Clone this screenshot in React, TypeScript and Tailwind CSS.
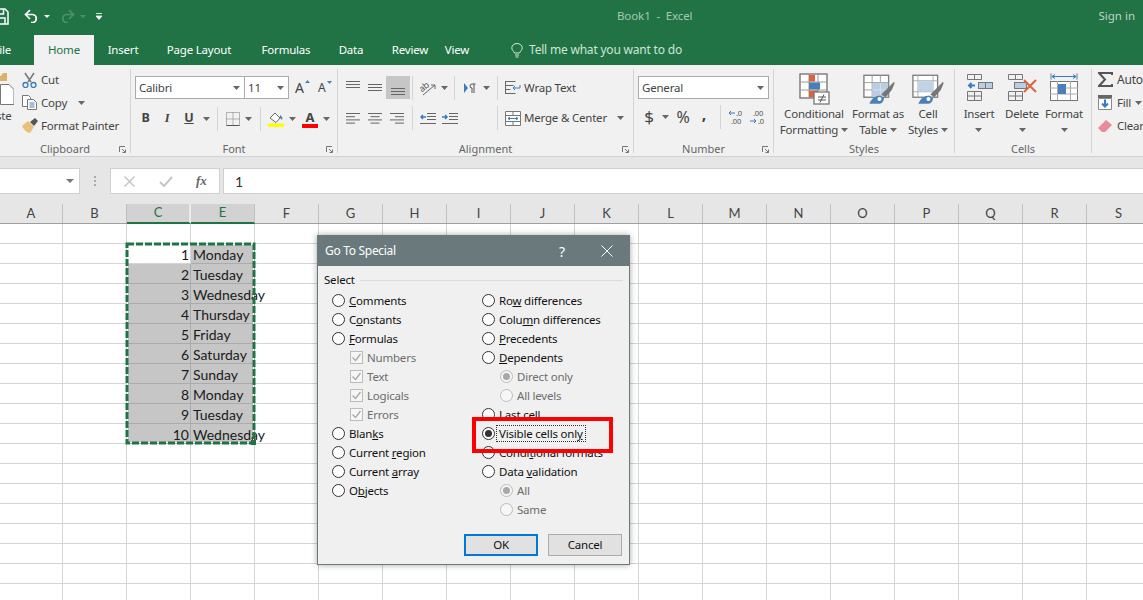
import type { ReactNode } from "react";

const columns = ["A", "B", "C", "E", "F", "G", "H", "I", "J", "K", "L", "M", "N", "O", "P", "Q", "R", "S"];
const days = ["Monday", "Tuesday", "Wednesday", "Thursday", "Friday", "Saturday", "Sunday", "Monday", "Tuesday", "Wednesday"];

function Caret({ className = "" }: { className?: string }) {
  return (
    <svg width="7" height="4" viewBox="0 0 7 4" className={`shrink-0 ${className}`}>
      <path d="M0 0h7L3.5 4z" fill="#666" />
    </svg>
  );
}

function Sep({ className = "" }: { className?: string }) {
  return <div className={`w-px h-[24px] bg-[#d4d4d4] shrink-0 ${className}`} />;
}

function Lines({ kind }: { kind: "left" | "center" | "right" }) {
  const rows = kind === "left" ? [[0, 14], [0, 9], [0, 14], [0, 9]] : kind === "center" ? [[0, 14], [2.5, 11.5], [0, 14], [2.5, 11.5]] : [[0, 14], [5, 14], [0, 14], [5, 14]];
  return (
    <svg width="14" height="11" viewBox="0 0 14 11" className="shrink-0">
      {rows.map((r, i) => (
        <path key={i} d={`M${r[0]} ${i * 3.2 + 0.5}H${r[1]}`} stroke="#666" />
      ))}
    </svg>
  );
}

function VAlign({ y }: { y: number }) {
  return (
    <svg width="14" height="14" viewBox="0 0 14 14" className="shrink-0">
      {[0, 3, 6].map((d) => (
        <path key={d} d={`M0 ${y + d + 0.5}H14`} stroke="#666" />
      ))}
    </svg>
  );
}

function Launcher() {
  return (
    <svg width="7" height="7" viewBox="0 0 7 7" className="absolute right-[4px] top-[5px]">
      <path d="M.5 6V.5H6M3 3l3.500 3.500M6.500 3.500v3h-3" stroke="#777" fill="none" />
    </svg>
  );
}

function Group({ label, className, launcher, children }: { label: string; className: string; launcher?: boolean; children: ReactNode }) {
  return (
    <div className={`h-[84px] flex flex-col border-r border-[#d4d4d4] shrink-0 ${className}`}>
      <div className="h-[72px]">{children}</div>
      <div className="relative h-[12px] text-center text-[11px] leading-[16px] tracking-normal text-[#666]">
        {label}
        {launcher && <Launcher />}
      </div>
    </div>
  );
}

function BigButton({ icon, lines, className }: { icon: ReactNode; lines: ReactNode[]; className: string }) {
  return (
    <div className={`flex flex-col items-center shrink-0 ${className}`}>
      <div className="h-[32px] mt-[4px] flex justify-center">{icon}</div>
      <div className="mt-[1px] leading-[16px] whitespace-nowrap text-center flex flex-col items-center">
        {lines.map((l, i) => (
          <div key={i} className="h-[16px] flex items-center gap-[3px]">
            {l}
          </div>
        ))}
      </div>
    </div>
  );
}

function TableGrid() {
  return (
    <>
      <rect x="1" y="1" width="27" height="24" fill="#fff" stroke="#808080" strokeWidth="1.500" />
      <path d="M1 9h27M1 17h27M10 1v24M19 1v24" stroke="#999" />
    </>
  );
}

function Brush() {
  return (
    <>
      <path d="M20 22l8-8 6-6 .5 2-3 7-7 8z" fill="#777" />
      <path d="M7 32c2-5 6-9 12-9l4 3c0 2-2 6-5 6z" fill="#4a80b8" />
      <circle cx="18" cy="27" r="2.200" fill="#fff" />
    </>
  );
}

function Radio({ on, off }: { on?: boolean; off?: boolean }) {
  return (
    <span className={`w-[13px] h-[13px] rounded-full border flex items-center justify-center shrink-0 ${off ? "border-[#bcbcbc] bg-[#f6f6f6]" : "border-[#333] bg-white"}`}>
      {on && <span className={`w-[7px] h-[7px] rounded-full ${off ? "bg-[#a8a8a8]" : "bg-[#333]"}`} />}
    </span>
  );
}

function Opt({ children }: { children: ReactNode }) {
  return (
    <div className="h-[19px] flex items-center gap-[4px] whitespace-nowrap text-[#111]">
      <Radio />
      <span>{children}</span>
    </div>
  );
}

function SubOpt({ on, children }: { on?: boolean; children: ReactNode }) {
  return (
    <div className="h-[19px] flex items-center gap-[4px] ml-[18px] whitespace-nowrap text-[#6d6d6d]">
      <Radio on={on} off />
      <span>{children}</span>
    </div>
  );
}

function Check({ children }: { children: ReactNode }) {
  return (
    <div className="h-[19px] flex items-center gap-[4px] ml-[18px] text-[#6d6d6d]">
      <svg width="13" height="13" viewBox="0 0 13 13" className="shrink-0">
        <rect x=".5" y=".5" width="12" height="12" fill="#f6f6f6" stroke="#bcbcbc" />
        <path d="M2.500 6.500l3 3 5-6.500" fill="none" stroke="#a8a8a8" strokeWidth="1.300" />
      </svg>
      <span>{children}</span>
    </div>
  );
}

function GoToSpecial() {
  return (
    <div className="absolute left-[317px] top-[235px] w-[313px] h-[330px] bg-[#f0f0f0] border border-[#6a7a7c] shadow-[0_0_6px_rgba(0,0,0,0.35)] font-['Noto_Sans',sans-serif] text-[11.5px] tracking-[-0.2px]">
      <div className="h-[30px] bg-[#6a7a7c] flex items-center pl-[7px] text-[12px] tracking-[-0.3px] text-white">
        <span className="w-[71px] whitespace-nowrap">Go To Special</span>
        <span className="ml-[161px] w-[10px] text-[14px] text-center">?</span>
        <svg width="12" height="12" viewBox="0 0 12 12" className="ml-[34px]">
          <path d="M.5.500l11 11M11.500.5l-11 11" stroke="#fff" />
        </svg>
      </div>
      <div className="mt-[6px] pl-[6px] pr-[6px] h-[16px] flex items-center gap-[5px] text-[#111]">
        <span>Select</span>
        <div className="flex-1 h-px bg-[#dcdcdc]" />
      </div>
      <div className="mt-[3px] pl-[14px] flex">
        <div className="w-[150px]">
          <Opt><u>C</u>omments</Opt>
          <Opt>C<u>o</u>nstants</Opt>
          <Opt><u>F</u>ormulas</Opt>
          <Check>Numbers</Check>
          <Check>Text</Check>
          <Check>Logicals</Check>
          <Check>Errors</Check>
          <Opt>Blan<u>k</u>s</Opt>
          <Opt>Current <u>r</u>egion</Opt>
          <Opt>Current <u>a</u>rray</Opt>
          <Opt>O<u>b</u>jects</Opt>
        </div>
        <div className="flex-1">
          <Opt>Ro<u>w</u> differences</Opt>
          <Opt>Colu<u>m</u>n differences</Opt>
          <Opt><u>P</u>recedents</Opt>
          <Opt><u>D</u>ependents</Opt>
          <SubOpt on>Direct only</SubOpt>
          <SubOpt>All levels</SubOpt>
          <Opt>Last cell</Opt>
          <div className="h-[19px] flex items-center gap-[2px] whitespace-nowrap text-[#111]">
            <Radio on />
            <span className="px-[2px] outline-1 outline-dotted outline-[#333] leading-[15px]">Visible cells onl<u>y</u></span>
          </div>
          <Opt>Condi<u>t</u>ional formats</Opt>
          <Opt>Data <u>v</u>alidation</Opt>
          <SubOpt on>All</SubOpt>
          <SubOpt>Same</SubOpt>
        </div>
      </div>
      <div className="mt-[15px] pr-[7px] flex justify-end gap-[10px] text-[#111]">
        <button className="w-[74px] h-[22px] bg-[#e1e1e1] border-2 border-[#0078d7]">OK</button>
        <button className="w-[74px] h-[22px] bg-[#e1e1e1] border border-[#adadad]">Cancel</button>
      </div>
    </div>
  );
}

export default function App() {
  return (
    <div className="relative w-[1143px] h-[600px] overflow-hidden bg-white font-['Noto_Sans',sans-serif]">
      {/* Title bar + tabs */}
      <div className="h-[65px] bg-[#217346]">
        <div className="h-[32px] flex items-center relative">
          <svg width="17" height="17" viewBox="0 0 17 17" className="ml-[-8px]">
            <path d="M1 1h12l3 3v12H1zM4.500 1v5h7V1M4 16v-6h9v6" fill="none" stroke="#fff" strokeWidth="1.500" />
          </svg>
          <svg width="15" height="14" viewBox="0 0 15 14" className="ml-[15px]">
            <path d="M6 1L1.500 5.500 6 10M2 5.500h7a4.200 4.200 0 0 1 0 8.200H7" fill="none" stroke="#fff" strokeWidth="1.700" />
          </svg>
          <svg width="6" height="3" viewBox="0 0 6 3" className="ml-[5px]"><path d="M0 0h6L3 3z" fill="#fff" /></svg>
          <svg width="15" height="14" viewBox="0 0 15 14" className="ml-[10px]">
            <path d="M9 1l4.500 4.500L9 10M13 5.500H6a4.200 4.200 0 0 0 0 8.200h2" fill="none" stroke="#4f9068" strokeWidth="1.700" />
          </svg>
          <svg width="6" height="3" viewBox="0 0 6 3" className="ml-[5px]"><path d="M0 0h6L3 3z" fill="#4f9068" /></svg>
          <svg width="6" height="7" viewBox="0 0 6 7" className="ml-[10px] mt-[1px]"><path d="M0 .5h6M0 3h6L3 6.500z" stroke="#fff" strokeWidth=".8" fill="#fff" /></svg>
          <div className="ml-[515px] text-[11.5px] tracking-[-0.1px] text-[#a6c8b4] whitespace-pre">Book1  -  Excel</div>
          <div className="ml-auto mr-[8px] text-[11.5px] text-[#bcd5c6]">Sign in</div>
        </div>
        <div className="h-[30px] mt-[3px] flex items-center text-[11.5px] tracking-[-0.2px] text-white whitespace-nowrap">
          <div className="w-[34px] pr-[23px] flex justify-end"><span>File</span></div>
          <div className="w-[60px] h-[30px] bg-[#f1f1f1] text-[#217346] flex items-center justify-center">Home</div>
          <div className="w-[58px] text-center">Insert</div>
          <div className="w-[94px] text-center">Page Layout</div>
          <div className="w-[80px] text-center">Formulas</div>
          <div className="w-[50px] text-center">Data</div>
          <div className="w-[68px] text-center">Review</div>
          <div className="w-[26px] flex justify-center">View</div>
          <svg width="12" height="15" viewBox="0 0 12 15" className="ml-[41px]">
            <path d="M3.500 10C2.500 8 .8 7 .8 4.800a5.200 4.300 0 0 1 10.400 0C11.200 7 9.500 8 8.500 10zM4 12h4M4.500 14h3" fill="none" stroke="#d8e8de" />
          </svg>
          <div className="ml-[6px] text-[12px] text-[#cfe3d7]">Tell me what you want to do</div>
        </div>
      </div>

      {/* Ribbon */}
      <div className="h-[92px] bg-[#f1f1f1] border-b border-[#d2d2d2] pt-[4px] flex text-[#444] text-[11.5px] tracking-[-0.2px]">
        <Group label="Clipboard" launcher className="w-[131px]">
          <div className="flex -mt-[1px]">
            <div className="w-[22px] shrink-0">
              <svg width="18" height="32" viewBox="0 0 18 32" className="ml-[-4px] mt-[5px]">
                <path d="M0 3h5l2-3h4v8H0z" fill="#d9b36b" />
                <path d="M4.500 11.500H13l5 5v15H4.500z" fill="#fff" stroke="#777" />
              </svg>
              <div className="ml-[-17px] mt-[3px] h-[16px] leading-[16px]">Paste</div>
            </div>
            <div className="flex flex-col">
              <div className="h-[23px] flex items-center gap-[4px]">
                <svg width="15" height="16" viewBox="0 0 15 16">
                  <path d="M3 1l6 9M12 1l-6 9" stroke="#777" strokeWidth="1.500" />
                  <circle cx="3.500" cy="13" r="2.500" fill="none" stroke="#3a7cc0" strokeWidth="1.300" />
                  <circle cx="11.500" cy="13" r="2.500" fill="none" stroke="#3a7cc0" strokeWidth="1.300" />
                </svg>
                Cut
              </div>
              <div className="h-[23px] flex items-center gap-[4px]">
                <svg width="15" height="15" viewBox="0 0 15 15">
                  <path d="M.5.500h6l2 2v9H.5z" fill="#fff" stroke="#777" />
                  <path d="M5.500 4.500h6l3 3v7h-9z" fill="#fff" stroke="#777" />
                  <path d="M7.500 8h5M7.500 10h5M7.500 12h5" stroke="#4a80b8" />
                </svg>
                <span>Copy</span>
                <Caret className="ml-[7px]" />
              </div>
              <div className="h-[23px] flex items-center gap-[3px] whitespace-nowrap">
                <svg width="16" height="15" viewBox="0 0 16 15">
                  <path d="M0 8l6-5 6 6-4 6c-3 0-6-3-8-7z" fill="#e9c07a" />
                  <path d="M8 4l5-4 3 3-4 5z" fill="#555" />
                </svg>
                Format Painter
              </div>
            </div>
          </div>
        </Group>

        <Group label="Font" launcher className="w-[207px]">
          <div className="pl-[4px] pt-[7px] h-[30px]">
            <div className="flex items-center h-[23px]">
              <div className="w-[110px] h-[23px] bg-white border border-[#ababab] flex items-center pl-[3px] pr-[4px] justify-between">
                Calibri <Caret />
              </div>
              <div className="w-[44px] h-[23px] bg-white border border-l-0 border-[#ababab] flex items-center pl-[3px] pr-[4px] justify-between">
                11 <Caret />
              </div>
              <div className="ml-[6px] w-[14px] text-[14px] relative">
                A
                <svg width="5" height="3" viewBox="0 0 5 3" className="absolute top-[3px] -right-[1px]"><path d="M0 3h5L2.500 0z" fill="#4a80b8" /></svg>
              </div>
              <div className="ml-[9px] w-[13px] text-[12px] relative">
                A
                <svg width="5" height="3" viewBox="0 0 5 3" className="absolute top-[2px] -right-[1px]"><path d="M0 0h5L2.500 3z" fill="#4a80b8" /></svg>
              </div>
            </div>
          </div>
          <div className="pl-[4px] mt-[9px] flex items-center h-[21px] text-[12.5px]">
            <div className="w-[21px] text-center font-bold">B</div>
            <div className="w-[22px] text-center italic font-['Liberation_Serif',serif] font-bold">I</div>
            <div className="w-[22px] text-center font-bold underline">U</div>
            <div className="w-[12px] flex justify-center"><Caret /></div>
            <Sep className="ml-[5px]" />
            <svg width="14" height="14" viewBox="0 0 14 14" className="ml-[8px]">
              <path d="M.5.500h13v13H.5zM7 .5v13M.5 7h13" fill="none" stroke="#777" strokeDasharray="1 1" />
              <path d="M.5 13.500h13" stroke="#555" />
            </svg>
            <Caret className="ml-[5px]" />
            <Sep className="ml-[8px]" />
            <svg width="16" height="16" viewBox="0 0 16 16" className="ml-[7px]">
              <path d="M2 7l5-5 5 5-4 4.500z" fill="#fff" stroke="#666" />
              <path d="M12 4c2 1 3 3 2 5l-2-2z" fill="#4a80b8" />
              <rect y="12.500" width="16" height="3.500" fill="#ffff00" />
            </svg>
            <Caret className="ml-[5px]" />
            <div className="ml-[6px] w-[16px] flex flex-col items-center h-[18px] relative">
              <span className="font-bold text-[13px] leading-[14px]">A</span>
              <div className="w-[16px] h-[4px] bg-[#ff0000] absolute bottom-0" />
            </div>
            <Caret className="ml-[5px]" />
          </div>
        </Group>

        <Group label="Alignment" launcher className="w-[296px]">
          <div className="pt-[7px] h-[30px] flex items-center">
            <div className="ml-[8px]"><VAlign y={0} /></div>
            <div className="ml-[8px]"><VAlign y={3} /></div>
            <div className="ml-[4px] w-[24px] h-[23px] bg-[#c6c6c6] flex items-center justify-center"><VAlign y={7} /></div>
            <Sep className="ml-[2px]" />
            <svg width="16" height="16" viewBox="0 0 16 16" className="ml-[7px]">
              <text x="0" y="9" fontSize="9" fill="#555" transform="rotate(-40 6 8)">ab</text>
              <path d="M3 15L15 5" stroke="#666" />
              <path d="M11 5h4v4" fill="none" stroke="#666" />
            </svg>
            <Caret className="ml-[5px]" />
            <Sep className="ml-[6px]" />
            <div className="ml-[9px] w-[12px] h-[14px] flex items-center">
              <svg width="12" height="10" viewBox="0 0 12 10">
                <path d="M0 0l4 5-4 5z" fill="#3a7cc0" />
                <path d="M8 1a2 2 0 0 0 0 4v5M8 1h3.500M10 1v9" fill="none" stroke="#555" />
              </svg>
            </div>
            <Caret className="ml-[7px]" />
            <Sep className="ml-[7px]" />
            <svg width="16" height="15" viewBox="0 0 16 15" className="ml-[7px]">
              <path d="M.5 1.500h10M.5 5.500h8M.5 9.500h5M.5 13.500h10" stroke="#666" />
              <path d="M.5 1v13" stroke="#666" />
              <path d="M15 5v3h-7M10 6L8 8l2 2" fill="none" stroke="#3a7cc0" />
            </svg>
            <span className="ml-[3px] whitespace-nowrap">Wrap Text</span>
          </div>
          <div className="mt-[7px] h-[24px] flex items-center">
            <div className="ml-[8px]"><Lines kind="left" /></div>
            <div className="ml-[8px]"><Lines kind="center" /></div>
            <div className="ml-[8px]"><Lines kind="right" /></div>
            <Sep className="ml-[8px]" />
            <svg width="16" height="11" viewBox="0 0 16 11" className="ml-[7px]">
              <path d="M7 .5h9M7 3.500h9M7 6.500h9M0 10.500h16" stroke="#666" />
              <path d="M6 4H1M3 2L1 4l2 2" fill="none" stroke="#3a7cc0" strokeWidth="1.500" />
            </svg>
            <svg width="16" height="11" viewBox="0 0 16 11" className="ml-[6px]">
              <path d="M7 .5h9M7 3.500h9M7 6.500h9M0 10.500h16" stroke="#666" />
              <path d="M0 4h5M3 2l2 2-2 2" fill="none" stroke="#3a7cc0" strokeWidth="1.500" />
            </svg>
            <Sep className="ml-[39px]" />
            <svg width="16" height="15" viewBox="0 0 16 15" className="ml-[7px]">
              <path d="M.5.500h15v14H.5zM.5 4.500h15M.5 10.500h15M8 .5v4M8 10.500v4" fill="#fff" stroke="#777" />
              <path d="M3 7.500h10M5 6L3 7.500 5 9M11 6l2 1.500L11 9" fill="none" stroke="#3a7cc0" />
            </svg>
            <span className="ml-[3px] w-[93px] whitespace-nowrap">Merge &amp; Center</span>
            <Caret />
          </div>
        </Group>

        <Group label="Number" launcher className="w-[140px]">
          <div className="pl-[4px] pt-[7px] h-[30px]">
            <div className="w-[131px] h-[23px] bg-white border border-[#ababab] flex items-center pl-[3px] pr-[4px] justify-between">
              General <Caret />
            </div>
          </div>
          <div className="mt-[6px] h-[24px] flex items-center">
            <div className="ml-[4px] w-[22px] text-center text-[17px] leading-[24px]">$</div>
            <Caret className="ml-[2px]" />
            <div className="ml-[4px] w-[20px] text-center text-[16px] leading-[24px]">%</div>
            <div className="ml-[1px] w-[20px] text-center text-[16px] leading-[18px] font-bold -mt-[6px]">,</div>
            <Sep className="ml-[6px]" />
            <svg width="16" height="14" viewBox="0 0 16 14" className="ml-[7px]">
              <path d="M7 3H1M3 1L1 3l2 2" fill="none" stroke="#3a7cc0" />
              <text x="8" y="6" fontSize="7.500" fill="#555">.0</text>
              <text x="3" y="13.500" fontSize="7.500" fill="#555">.00</text>
            </svg>
            <svg width="16" height="14" viewBox="0 0 16 14" className="ml-[6px]">
              <text x="3" y="6" fontSize="7.500" fill="#555">.00</text>
              <path d="M0 11h6M4 9l2 2-2 2" fill="none" stroke="#3a7cc0" />
              <text x="8" y="13.500" fontSize="7.500" fill="#555">.0</text>
            </svg>
          </div>
        </Group>

        <Group label="Styles" className="w-[181px]">
          <div className="flex">
            <BigButton
              className="ml-[9px] w-[62px]"
              lines={["Conditional", <>Formatting <Caret /></>]}
              icon={
                <svg width="31" height="32" viewBox="0 0 31 32">
                  <TableGrid />
                  <rect x="10" y="2" width="6" height="6.500" fill="#d9643f" />
                  <rect x="10" y="9.500" width="11" height="7" fill="#4a80b8" />
                  <rect x="10" y="17.500" width="9" height="7" fill="#d9643f" />
                  <rect x="15" y="19" width="15" height="12" fill="#fff" stroke="#777" strokeWidth="1.300" />
                  <path d="M19 24h8M19 27h8M25 21.500l-4 8" stroke="#555" />
                </svg>
              }
            />
            <BigButton
              className="ml-[5px] w-[56px]"
              lines={["Format as", <>Table <Caret /></>]}
              icon={
                <svg width="32" height="32" viewBox="0 0 35 32" className="ml-[2px]">
                  <TableGrid />
                  <rect x="10.500" y="9.500" width="17" height="15" fill="#b9cde3" />
                  <path d="M10 17h18M19 9v16" stroke="#d9e3ee" />
                  <Brush />
                </svg>
              }
            />
            <BigButton
              className="ml-[2px] w-[40px]"
              lines={["Cell", <>Styles <Caret /></>]}
              icon={
                <svg width="32" height="32" viewBox="0 0 35 32">
                  <rect x="1" y="1" width="27" height="24" fill="#fff" stroke="#808080" strokeWidth="1.500" />
                  <path d="M1 7h27M1 19h27M6.500 1v24M23 1v24" stroke="#aaa" />
                  <rect x="7" y="7.500" width="16" height="11" fill="#bfd2e6" />
                  <Brush />
                </svg>
              }
            />
          </div>
        </Group>

        <Group label="Cells" className="w-[137px]">
          <div className="flex">
            <BigButton
              className="ml-[4px] w-[40px]"
              lines={["Insert", <Caret />]}
              icon={
                <svg width="27" height="28" viewBox="0 0 27 28">
                  <path d="M1.500 1.500h14v5h-14zM8.500 1.500v5M1.500 18.500h14v9h-14zM1.500 23h14M8.500 18.500v9" fill="none" stroke="#777" />
                  <rect x="12.500" y="9.500" width="14" height="6" fill="#b9cde3" stroke="#777" />
                  <path d="M19.500 9.500v6" stroke="#777" />
                  <path d="M9 12.500H3M5.500 10l-2.500 2.500L5.500 15" fill="none" stroke="#3a7cc0" strokeWidth="2" />
                </svg>
              }
            />
            <BigButton
              className="ml-[3px] w-[40px]"
              lines={["Delete", <Caret />]}
              icon={
                <svg width="31" height="28" viewBox="0 0 31 28">
                  <path d="M1.500 1.500h14v5h-14zM8.500 1.500v5M1.500 18.500h14v9h-14zM1.500 23h14M8.500 18.500v9" fill="none" stroke="#777" />
                  <rect x="7.500" y="9.500" width="12" height="6" fill="#b9cde3" stroke="#777" />
                  <path d="M17 7l12 12M29 7L17 19" stroke="#d9643f" strokeWidth="2" />
                </svg>
              }
            />
            <BigButton
              className="ml-[2px] w-[40px]"
              lines={["Format", <Caret />]}
              icon={
                <svg width="29" height="32" viewBox="0 0 29 32">
                  <path d="M2 3.500h24M5 1.500l-3 2 3 2M23 1.500l3 2-3 2M1 .5v6M27 .5v6" fill="none" stroke="#3a7cc0" />
                  <rect x=".5" y="8.500" width="27" height="19" fill="#fff" stroke="#777" />
                  <path d="M7.500 8v19M20.500 8v19M0 15h28M0 21h28" stroke="#aaa" />
                  <rect x="8" y="11" width="8" height="10" fill="#4a80b8" />
                </svg>
              }
            />
          </div>
        </Group>

        <div className="flex flex-col pl-[6px] whitespace-nowrap -mt-[1px]">
          <div className="h-[23px] flex items-center gap-[4px]">
            <svg width="15" height="15" viewBox="0 0 15 15">
              <path d="M14 3V1H1l6 6.500L1 14h13v-2" fill="none" stroke="#555" strokeWidth="2" />
            </svg>
            <span className="text-[12px]">AutoSum</span>
          </div>
          <div className="h-[23px] flex items-center gap-[4px]">
            <svg width="15" height="15" viewBox="0 0 15 15">
              <path d="M0 0h14v3H0z" fill="#666" />
              <path d="M.5 3.500h13v11H.5z" fill="#fff" stroke="#888" />
              <path d="M7 4.500v7M4 8.500l3 3 3-3" fill="none" stroke="#3a7cc0" strokeWidth="2" />
            </svg>
            <span>Fill</span>
            <Caret />
          </div>
          <div className="h-[23px] flex items-center gap-[4px]">
            <svg width="15" height="14" viewBox="0 0 15 14">
              <path d="M0 9l8-8 6 5-7 7H4z" fill="#e88a9a" />
            </svg>
            <span>Clear</span>
          </div>
        </div>
      </div>

      {/* Formula bar */}
      <div className="h-[47px] bg-[#e6e6e6] pt-[11px]">
        <div className="flex h-[26px] font-['Lato',sans-serif] text-[14px] text-[#333]">
          <div className="w-[80px] bg-white border-y border-r border-[#d0d0d0] flex items-center justify-end pr-[5px]">
            <svg width="8" height="4" viewBox="0 0 8 4"><path d="M0 0h8L4 4z" fill="#777" /></svg>
          </div>
          <div className="w-[30px] flex flex-col items-center justify-center gap-[2px]">
            <div className="w-[2px] h-[2px] bg-[#aaa]" />
            <div className="w-[2px] h-[2px] bg-[#aaa]" />
            <div className="w-[2px] h-[2px] bg-[#aaa]" />
          </div>
          <div className="w-[110px] bg-white border border-[#d0d0d0] flex items-center">
            <svg width="11" height="11" viewBox="0 0 11 11" className="ml-[13px]">
              <path d="M.5.500l10 10M10.500.5l-10 10" stroke="#c6c6c6" strokeWidth="1.500" />
            </svg>
            <svg width="14" height="11" viewBox="0 0 14 11" className="ml-[24px]">
              <path d="M1 6l4 4 8-9" fill="none" stroke="#c6c6c6" strokeWidth="2" />
            </svg>
            <span className="ml-[23px] italic font-['Liberation_Serif',serif] font-bold text-[13px] text-[#666]">fx</span>
          </div>
          <div className="flex-1 ml-[3px] bg-white border-y border-l border-[#d0d0d0] flex items-center pl-[11px]">1</div>
        </div>
      </div>

      {/* Sheet */}
      <div className="font-['Lato',sans-serif]">
        <div className="h-[20px] flex bg-[#e6e6e6] border-b border-[#9f9f9f] text-[13px] text-[#444] w-[1160px]">
          {columns.map((c, i) => {
            const picked = c === "C" || c === "E";
            return (
              <div
                key={c}
                className={`${i === 0 ? "w-[63px]" : "w-[64px]"} shrink-0 flex items-center justify-center ${picked ? "bg-[#d2d2d2] text-[#217346] border-b-2 border-[#217346] h-[20px]" : ""} ${c === "C" ? "border-r-2 border-r-[#ececec]" : "border-r border-r-[#c0c0c0]"}`}
              >
                {c}
              </div>
            );
          })}
        </div>
        {Array.from({ length: 19 }).map((_, row) => (
          <div key={row} className="h-[20px] flex w-[1160px] text-[14px] text-[#1a1a1a]">
            {columns.map((c, i) => {
              const inSel = row >= 1 && row <= 10 && (c === "C" || c === "E");
              const bg = inSel && !(row === 1 && c === "C") ? "bg-[#c6c6c6] border-[#ababab]" : "border-[#d4d4d4]";
              return (
                <div key={c} className={`${i === 0 ? "w-[63px]" : "w-[64px]"} shrink-0 border-r border-b flex items-center whitespace-nowrap pt-[1px] ${bg} ${c === "C" ? "justify-end pr-[1px]" : "pl-[2px]"}`}>
                  {inSel && c === "C" && row}
                  {inSel && c === "E" && days[row - 1]}
                </div>
              );
            })}
          </div>
        ))}
      </div>

      {/* Copy marquee */}
      <svg width="131" height="203" viewBox="0 0 131 203" className="absolute left-[125px] top-[242px]">
        <rect x="2.500" y="2.500" width="126" height="198" fill="none" stroke="#fff" strokeWidth="1" />
        <rect x="2" y="2" width="127" height="199" fill="none" stroke="#217346" strokeWidth="3" strokeDasharray="7 2" />
        <rect x="126" y="198" width="5" height="5" fill="#217346" />
      </svg>

      <GoToSpecial />

      {/* Red highlight */}
      <div className="absolute left-[472px] top-[417px] w-[141px] h-[36px] border-[4px] border-[#ff0000]" />
    </div>
  );
}
